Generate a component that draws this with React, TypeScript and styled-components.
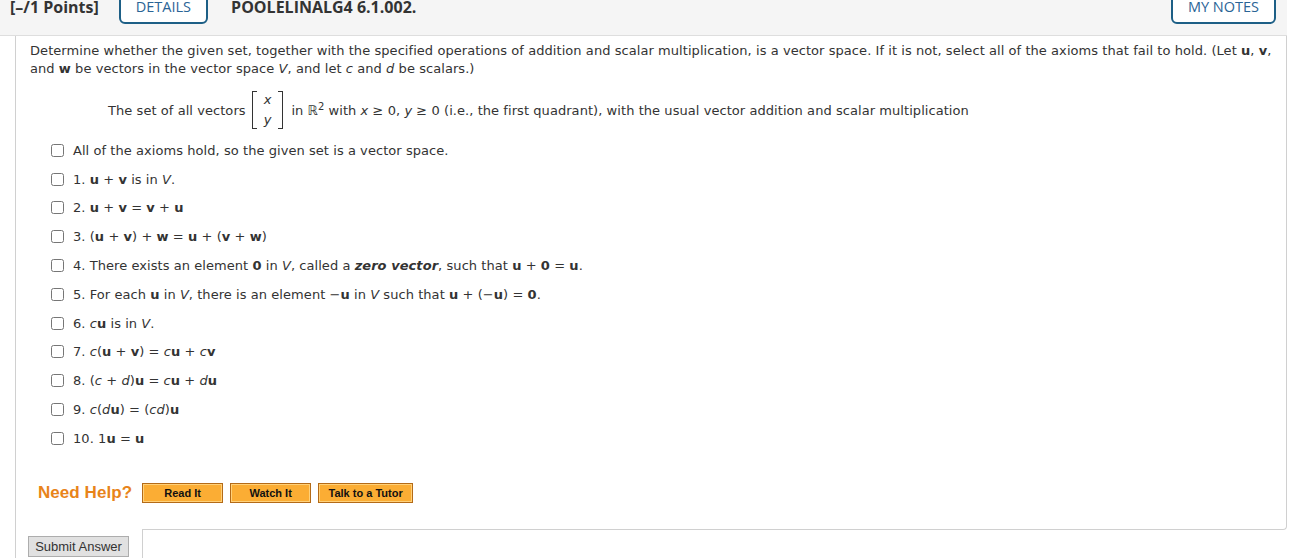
import styled, { createGlobalStyle } from "styled-components";

const GlobalStyle = createGlobalStyle`
  body {
    margin: 0;
    background: #fff;
  }
  * {
    box-sizing: border-box;
  }
`;

const Page = styled.div`
  width: 1287px;
  height: 558px;
  overflow: hidden;
`;

const Header = styled.div`
  display: flex;
  align-items: flex-start;
  height: 50px;
  margin-top: -14px;
  padding: 4px 11px 0 10px;
  background: #f5f5f5;
  border-bottom: 1px solid #dedede;
  font-family: "Open Sans", sans-serif;
  color: #333;
`;

const HeaderRow = styled.div`
  display: flex;
  align-items: center;
  height: 33px;
  width: 100%;
`;

const Points = styled.span`
  font-size: 16px;
  font-weight: 700;
  margin-right: 20px;
`;

const OutlineButton = styled.button<{ $push?: boolean }>`
  height: 34px;
  padding: 0 15px;
  margin-left: ${(p) => (p.$push ? "auto" : "0")};
  border: 2px solid #1d5f86;
  border-radius: 6px;
  background: #fff;
  color: #2a6496;
  font-family: "Open Sans", sans-serif;
  font-size: 14.5px;
  text-transform: uppercase;
`;

const QuestionId = styled.span`
  font-size: 16px;
  font-weight: 700;
  margin-left: 23px;
`;

const Body = styled.div`
  margin-left: 15px;
  border: 1px solid #d0d0d0;
  border-top: none;
  border-bottom-right-radius: 4px;
  padding: 6px 14px 26px 14px;
  font-family: "DejaVu Sans", Verdana, sans-serif;
  font-size: 13px;
  letter-spacing: 0.06px;
  color: #333;
`;

const Prompt = styled.p`
  margin: 0;
  line-height: 18px;
`;

const MathLine = styled.div`
  display: flex;
  align-items: center;
  margin: 13px 0 7px 78px;
  height: 38px;
`;

const MathText = styled.span`
  white-space: pre;

  sup {
    font-size: 10px;
    vertical-align: 5px;
    line-height: 0;
  }
`;

const Vector = styled.span`
  display: inline-flex;
  align-items: stretch;
  height: 38px;
  margin: 0 8px 0 6px;
`;

const Bracket = styled.span<{ $side: "left" | "right" }>`
  width: 5px;
  border: 1px solid #333;
  ${(p) => (p.$side === "left" ? "border-right: none;" : "border-left: none;")}
`;

const VectorEntries = styled.span`
  display: flex;
  flex-direction: column;
  justify-content: space-between;
  padding: 0 7px;
  font-style: italic;
  line-height: 18px;
  font-size: 13px;
`;

const Options = styled.div`
  display: flex;
  flex-direction: column;
  padding-left: 21px;
`;

const Option = styled.label`
  display: flex;
  align-items: center;
  height: 28.8px;
  gap: 9px;
`;

const Check = styled.input`
  margin: 0;
  width: 13px;
  height: 13px;
`;

const HelpRow = styled.div`
  display: flex;
  align-items: center;
  gap: 7px;
  margin: 30px 0 0 8px;
`;

const HelpLabel = styled.span`
  font-family: "Liberation Sans", Arial, sans-serif;
  font-size: 17px;
  font-weight: 700;
  color: #e8841a;
  margin-right: 3px;
`;

const HelpButton = styled.button<{ $w: number }>`
  width: ${(p) => p.$w}px;
  height: 20px;
  padding: 0;
  background: #fbad34;
  border: 1px solid #b46a17;
  box-shadow: inset 0 0 0 1px #ffd17a;
  font-family: "Liberation Sans", Arial, sans-serif;
  font-size: 11px;
  font-weight: 700;
  color: #111;
`;

const Footer = styled.div`
  display: flex;
  margin-left: 15px;
`;

const SubmitTab = styled.div`
  position: relative;
  margin-top: -1px;
  width: 128px;
  height: 40px;
  padding: 7px 0 0 12px;
  background: #fff;
  border-left: 1px solid #d0d0d0;
  border-right: 1px solid #d0d0d0;
`;

const SubmitButton = styled.button`
  width: 101px;
  height: 21px;
  padding: 0;
  background: #e1e1e1;
  border: 1px solid #adadad;
  font-family: "Liberation Sans", Arial, sans-serif;
  font-size: 13px;
  color: #333;
`;

const options: React.ReactNode[] = [
  <>All of the axioms hold, so the given set is a vector space.</>,
  <>1. <b>u</b> + <b>v</b> is in <i>V</i>.</>,
  <>2. <b>u</b> + <b>v</b> = <b>v</b> + <b>u</b></>,
  <>3. (<b>u</b> + <b>v</b>) + <b>w</b> = <b>u</b> + (<b>v</b> + <b>w</b>)</>,
  <>
    4. There exists an element <b>0</b> in <i>V</i>, called a{" "}
    <b><i>zero vector</i></b>, such that <b>u</b> + <b>0</b> = <b>u</b>.
  </>,
  <>
    5. For each <b>u</b> in <i>V</i>, there is an element −<b>u</b> in <i>V</i>{" "}
    such that <b>u</b> + (−<b>u</b>) = <b>0</b>.
  </>,
  <>6. <i>c</i><b>u</b> is in <i>V</i>.</>,
  <>7. <i>c</i>(<b>u</b> + <b>v</b>) = <i>c</i><b>u</b> + <i>c</i><b>v</b></>,
  <>8. (<i>c</i> + <i>d</i>)<b>u</b> = <i>c</i><b>u</b> + <i>d</i><b>u</b></>,
  <>9. <i>c</i>(<i>d</i><b>u</b>) = (<i>cd</i>)<b>u</b></>,
  <>10. 1<b>u</b> = <b>u</b></>,
];

export default function App() {
  return (
    <Page>
      <GlobalStyle />
      <Header>
        <HeaderRow>
          <Points>[–/1 Points]</Points>
          <OutlineButton>Details</OutlineButton>
          <QuestionId>POOLELINALG4 6.1.002.</QuestionId>
          <OutlineButton $push>My Notes</OutlineButton>
        </HeaderRow>
      </Header>
      <Body>
        <Prompt>
          Determine whether the given set, together with the specified operations of
          addition and scalar multiplication, is a vector space. If it is not, select
          all of the axioms that fail to hold. (Let <b>u</b>, <b>v</b>, and <b>w</b> be
          vectors in the vector space <i>V</i>, and let <i>c</i> and <i>d</i> be
          scalars.)
        </Prompt>
        <MathLine>
          <MathText>The set of all vectors</MathText>
          <Vector>
            <Bracket $side="left" />
            <VectorEntries>
              <span>x</span>
              <span>y</span>
            </VectorEntries>
            <Bracket $side="right" />
          </Vector>
          <MathText>
            in ℝ<sup>2</sup> with <i>x</i> ≥ 0, <i>y</i> ≥ 0 (i.e., the first
            quadrant), with the usual vector addition and scalar multiplication
          </MathText>
        </MathLine>
        <Options>
          {options.map((content, i) => (
            <Option key={i}>
              <Check type="checkbox" />
              <span>{content}</span>
            </Option>
          ))}
        </Options>
        <HelpRow>
          <HelpLabel>Need Help?</HelpLabel>
          <HelpButton $w={81}>Read It</HelpButton>
          <HelpButton $w={81}>Watch It</HelpButton>
          <HelpButton $w={95}>Talk to a Tutor</HelpButton>
        </HelpRow>
      </Body>
      <Footer>
        <SubmitTab>
          <SubmitButton>Submit Answer</SubmitButton>
        </SubmitTab>
      </Footer>
    </Page>
  );
}
